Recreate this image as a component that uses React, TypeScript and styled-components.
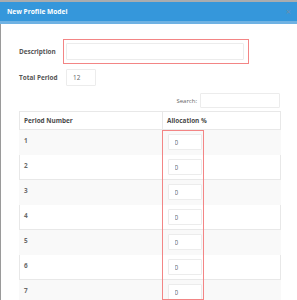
import React from 'react';
import styled, { createGlobalStyle } from 'styled-components';

const GlobalStyle = createGlobalStyle`
  html, body {
    margin: 0;
    padding: 0;
    background: #ffffff;
  }
  body {
    font-family: "Open Sans", "Liberation Sans", sans-serif;
  }
`;

const periods = [1, 2, 3, 4, 5, 6, 7];

const App = () => {
  return (
    <App.Modal>
      <GlobalStyle />
      <App.Header>
        <span className="title">New Profile Model</span>
        <span className="close">×</span>
      </App.Header>

      <App.Body>
        <FormRow>
          <Label>Description</Label>
          <Highlight>
            <TextInput width={178} height={17} />
          </Highlight>
        </FormRow>

        <FormRow $gap={5}>
          <Label>Total Period</Label>
          <TextInput width={30} height={17} $offset={3} defaultValue="12" />
        </FormRow>

        <SearchRow>
          <span>Search:</span>
          <TextInput width={80} height={15} />
        </SearchRow>

        <TableWrap>
          <Table>
            <thead>
              <tr>
                <HeadCell $width={134}>Period Number</HeadCell>
                <HeadCell>Allocation %</HeadCell>
              </tr>
            </thead>
            <tbody>
              {periods.map((p) => (
                <Row key={p} $striped={p % 2 === 1}>
                  <NumberCell>{p}</NumberCell>
                  <InputCell>
                    <TextInput width={34} height={16} defaultValue="0" />
                  </InputCell>
                </Row>
              ))}
            </tbody>
          </Table>
          <ColumnMark />
        </TableWrap>
      </App.Body>
    </App.Modal>
  );
};

App.Modal = styled.div`
  width: 297px;
  height: 300px;
  overflow: hidden;
  display: flex;
  flex-direction: column;
  background: #ffffff;
`;

App.Header = styled.div`
  flex: none;
  height: 19px;
  border-top: 2px solid #a9acaf;
  border-bottom: 3px solid #6fb2e3;
  background: #3597db;
  display: flex;
  align-items: center;
  justify-content: space-between;
  padding: 0 6px 0 7px;

  .title {
    color: #ffffff;
    font-size: 6.6px;
    font-weight: 700;
  }

  .close {
    color: #6f8fae;
    font-size: 9px;
    line-height: 1;
  }
`;

App.Body = styled.div`
  flex: 1;
  border-left: 1px solid #9a9a9a;
  padding: 15px 17px 0 18px;
  display: flex;
  flex-direction: column;
`;

const FormRow = styled.div<{ $gap?: number }>`
  display: flex;
  align-items: center;
  margin-top: ${(p) => p.$gap ?? 0}px;
`;

const Label = styled.label`
  width: 44px;
  flex: none;
  font-size: 6.4px;
  font-weight: 700;
  color: #555555;
`;

const Highlight = styled.div`
  border: 1.5px solid #f38585;
  padding: 3px 4px 3px 2px;
  display: flex;
`;

const TextInput = styled.input.attrs({ type: 'text' })<{
  width: number;
  height: number;
  $offset?: number;
}>`
  box-sizing: border-box;
  width: ${(p) => p.width}px;
  height: ${(p) => p.height}px;
  margin: 0 0 0 ${(p) => p.$offset ?? 0}px;
  border: 1px solid #ececec;
  border-radius: 1px;
  background: #ffffff;
  padding: 0 6px;
  font-family: "Open Sans", "Liberation Sans", sans-serif;
  font-size: 6.4px;
  color: #666666;
  outline: none;
`;

const SearchRow = styled.div`
  display: flex;
  justify-content: flex-end;
  align-items: center;
  gap: 3px;
  margin-top: 7px;
  font-size: 6px;
  color: #666666;
`;

const TableWrap = styled.div`
  position: relative;
  margin-top: 3px;
`;

const Table = styled.table`
  width: 262px;
  border-collapse: collapse;
  font-size: 6.4px;
  color: #555555;
`;

const HeadCell = styled.th<{ $width?: number }>`
  width: ${(p) => (p.$width ? `${p.$width}px` : 'auto')};
  height: 17px;
  padding: 0 4px;
  text-align: left;
  font-weight: 700;
  color: #4a4a4a;
  border: 1px solid #e8e8e8;
`;

const Row = styled.tr<{ $striped: boolean }>`
  height: 25px;
  background: ${(p) => (p.$striped ? '#f9f9f9' : '#ffffff')};
  border: 1px solid ${(p) => (p.$striped ? '#f9f9f9' : '#e8e8e8')};
`;

const NumberCell = styled.td`
  vertical-align: top;
  padding: 6px 4px 0;
  font-weight: 700;
  color: #6a6a6a;
`;

const InputCell = styled.td`
  vertical-align: top;
  padding: 4px 0 0 5px;
`;

const ColumnMark = styled.div`
  position: absolute;
  left: 143px;
  top: 19px;
  width: 40px;
  height: 168px;
  border: 1.5px solid #f38585;
  pointer-events: none;
`;

export default App;
